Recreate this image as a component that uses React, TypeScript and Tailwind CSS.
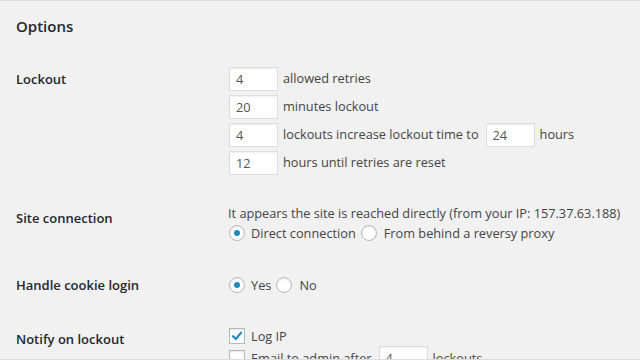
const font = { fontFamily: '"Open Sans", "Noto Sans", sans-serif' };

type NumBoxProps = { value: string; className?: string };

const NumBox = ({ value, className }: NumBoxProps) => (
  <input
    type="text"
    defaultValue={value}
    className={`h-[24px] w-[49px] bg-white border border-[#dddddd] shadow-[inset_0_1px_2px_rgba(0,0,0,0.07)] pl-[6px] text-[12.75px] text-[#555] outline-none ${className ?? ''}`}
  />
);

const Radio = ({ checked }: { checked?: boolean }) => (
  <span className="flex h-[16px] w-[16px] shrink-0 items-center justify-center rounded-full border border-[#b4b9be] bg-white shadow-[inset_0_1px_2px_rgba(0,0,0,0.1)]">
    {checked && <span className="h-[6px] w-[6px] rounded-full bg-[#1e8cbe]" />}
  </span>
);

const Checkbox = ({ checked }: { checked?: boolean }) => (
  <span className="flex h-[16px] w-[16px] shrink-0 items-center justify-center border border-[#b4b9be] bg-white shadow-[inset_0_1px_2px_rgba(0,0,0,0.1)]">
    {checked && (
      <svg width="14" height="14" viewBox="0 0 14 14">
        <path d="M3 7.2 L5.8 10 L11.2 3.6" fill="none" stroke="#1e8cbe" strokeWidth="2.2" strokeLinecap="round" strokeLinejoin="round" />
      </svg>
    )}
  </span>
);

const Label = ({ children, className }: { children: React.ReactNode; className?: string }) => (
  <div className={`w-[213px] shrink-0 text-[13px] font-semibold text-[#23282d] leading-[20px] ${className ?? ''}`}>{children}</div>
);

export default function App() {
  return (
    <div style={font} className="h-[360px] overflow-hidden bg-[#f1f1f1] border-t border-b border-[#dcdcdc] text-[12.75px] text-[#444]">
      <div className="pl-[16px]">
        <h2 className="mt-[15px] text-[15px] font-semibold leading-[20px] text-[#23282d]">Options</h2>

        {/* Lockout */}
        <div className="mt-[31px] flex">
          <Label className="mt-[2px]">Lockout</Label>
          <div className="flex flex-col gap-[4px]">
            <div className="flex items-center gap-[5px]">
              <NumBox value="4" />
              <span>allowed retries</span>
            </div>
            <div className="flex items-center gap-[5px]">
              <NumBox value="20" />
              <span>minutes lockout</span>
            </div>
            <div className="flex items-center gap-[5px]">
              <NumBox value="4" />
              <span>lockouts increase lockout time to</span>
              <NumBox value="24" className="ml-[2px]" />
              <span>hours</span>
            </div>
            <div className="flex items-center gap-[5px]">
              <NumBox value="12" />
              <span>hours until retries are reset</span>
            </div>
          </div>
        </div>

        {/* Site connection */}
        <div className="mt-[28px] flex">
          <Label className="mt-[5px]">Site connection</Label>
          <div className="flex flex-col leading-[20px]">
            <div className="-ml-[1px]">It appears the site is reached directly (from your IP: 157.37.63.188)</div>
            <div className="flex items-center gap-[5px]">
              <label className="flex items-center gap-[6px]">
                <Radio checked />
                <span>Direct connection</span>
              </label>
              <label className="flex items-center gap-[7px]">
                <Radio />
                <span>From behind a reversy proxy</span>
              </label>
            </div>
          </div>
        </div>

        {/* Handle cookie login */}
        <div className="mt-[32px] flex">
          <Label>Handle cookie login</Label>
          <div className="flex items-center gap-[5px] leading-[20px]">
            <label className="flex items-center gap-[6px]">
              <Radio checked />
              <span>Yes</span>
            </label>
            <label className="flex items-center gap-[7px]">
              <Radio />
              <span>No</span>
            </label>
          </div>
        </div>

        {/* Notify on lockout */}
        <div className="mt-[31px] flex">
          <Label className="mt-[3px]">Notify on lockout</Label>
          <div className="flex flex-col leading-[20px]">
            <label className="flex items-center gap-[6px]">
              <Checkbox checked />
              <span>Log IP</span>
            </label>
            <div className="flex items-center gap-[5px]">
              <label className="flex items-center gap-[6px]">
                <Checkbox />
                <span>Email to admin after</span>
              </label>
              <NumBox value="4" className="ml-[2px]" />
              <span>lockouts</span>
            </div>
          </div>
        </div>
      </div>
    </div>
  );
}
